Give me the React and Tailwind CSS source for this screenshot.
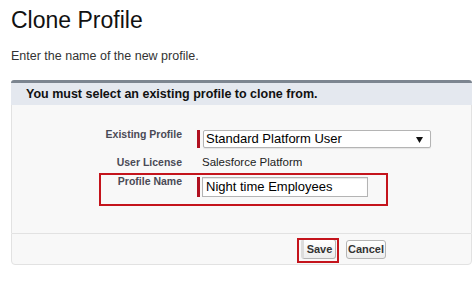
export default function App() {
  const font = { fontFamily: '"Liberation Sans", Arial, sans-serif' }

  return (
    <div className="relative w-[474px] h-[288px] bg-white overflow-hidden" style={font}>
      {/* Page heading */}
      <h1 className="mt-[6px] pl-[11px] text-[23px] leading-[28px] text-[#111]">Clone Profile</h1>
      <p className="mt-[14px] pl-[11px] text-[12.5px] leading-[16px] text-[#333]">
        Enter the name of the new profile.
      </p>

      {/* Panel */}
      <div className="mt-[16px] ml-[11px] w-[461px]">
        <div className="h-[25px] border-t-[3px] border-[#7c8590] bg-[#e4e8ef] rounded-t-[3px] pl-[15px] flex items-center">
          <span className="text-[12.5px] font-bold text-[#111]">
            You must select an existing profile to clone from.
          </span>
        </div>

        <div className="border-x border-[#e2e2e2] bg-[#f8f8f8] pt-[25px] pb-[36px]">
          {/* Existing Profile */}
          <div className="flex items-start">
            <div className="w-[170px] -mt-[1px] text-right text-[10.5px] leading-[11px] font-bold text-[#4a4a56]">
              Existing Profile
            </div>
            <div className="ml-[15px] w-[3px] h-[18px] bg-[#b01020]" />
            <div className="relative ml-[3px] w-[228px] h-[18px] bg-white border border-[#b4b4b4] rounded-[2px] shadow-[0_1px_1px_rgba(0,0,0,0.08)] flex items-center pl-[2px]">
              <span className="text-[13px] leading-[16px] text-black">Standard Platform User</span>
              <svg className="absolute right-[7px] top-[6px]" width="7" height="6" viewBox="0 0 7 6">
                <path d="M0 0h7L3.5 6z" fill="#111" />
              </svg>
            </div>
          </div>

          {/* User License */}
          <div className="mt-[7px] flex items-start">
            <div className="w-[170px] text-right text-[10.5px] leading-[14px] font-bold text-[#4a4a56]">
              User License
            </div>
            <div className="ml-[20px] text-[11.5px] leading-[14px] text-[#222]">Salesforce Platform</div>
          </div>

          {/* Profile Name */}
          <div className="mt-[8px] flex items-start">
            <div className="w-[170px] -mt-[1px] text-right text-[10.5px] leading-[11px] font-bold text-[#4a4a56]">
              Profile Name
            </div>
            <div className="ml-[15px] w-[3px] h-[20px] bg-[#b01020]" />
            <div className="ml-[2px] w-[166px] h-[20px] bg-white border border-[#b4b4b4] shadow-[inset_0_1px_1px_rgba(0,0,0,0.1)] flex items-center pl-[3px]">
              <span className="text-[13px] leading-[16px] text-black">Night time Employees</span>
            </div>
          </div>
        </div>

        {/* Button bar */}
        <div className="h-[32px] border border-[#e2e2e2] bg-[#f8f8f8] rounded-b-[4px] flex items-center pl-[289px] gap-[10px]">
          <button className="w-[35px] h-[20px] border border-[#b5b5b5] border-l-[3px] border-l-[#dcdcdc] rounded-[3px] bg-gradient-to-b from-white to-[#ededed] text-[11px] font-bold text-[#333]">
            Save
          </button>
          <button className="w-[40px] h-[19px] border border-[#b5b5b5] rounded-[3px] bg-gradient-to-b from-white to-[#ededed] text-[11px] font-bold text-[#333]">
            Cancel
          </button>
        </div>
      </div>

      {/* Red annotation boxes */}
      <div className="absolute left-[99px] top-[173px] w-[289px] h-[33px] border-2 border-[#c4141c]" />
      <div className="absolute left-[297px] top-[238px] w-[42px] h-[25px] border-2 border-[#c4141c]" />
    </div>
  )
}
